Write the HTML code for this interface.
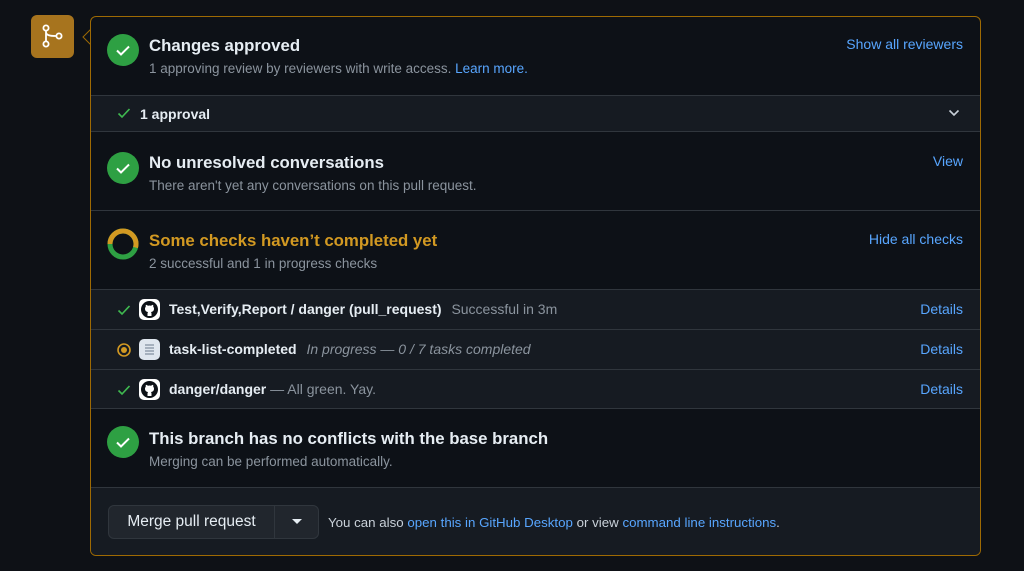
<!DOCTYPE html>
<html><head><style>
*{margin:0;padding:0;box-sizing:border-box}
body{width:1024px;height:571px;background:#0e1116;font-family:"Liberation Sans",sans-serif;color:#c9d1d9;position:relative;overflow:hidden}
.abs{position:absolute}
.icon{left:31px;top:15px;width:43px;height:43px;background:#a7741e;border-radius:6px}
.panel{left:90px;top:16px;width:891px;height:540px;border:1px solid #9e6a03;border-radius:6px;background:#0d1117;overflow:hidden}
.sec{position:absolute;left:0;width:889px;border-top:1px solid #30363d}
.t{position:absolute;left:58px;font-size:16.8px;font-weight:bold;color:#e6edf3}
.s{position:absolute;left:58px;font-size:13.5px;color:#8b949e}
.link{color:#58a6ff}
.r{position:absolute;right:17px;font-size:14px;color:#58a6ff}
.circ{position:absolute;left:16px;width:32px;height:32px;border-radius:50%;background:#2ea043}
.row{position:absolute;left:0;width:889px;height:40px;background:#161b22;border-top:1px solid #30363d}
.row .n{position:absolute;left:78px;top:11px;font-size:14px;font-weight:bold;color:#e6edf3}
.gh{position:absolute;left:48px;top:9px;width:21px;height:21px;border-radius:5px;background:#fff}
</style></head><body>
<div class="abs icon"><svg width="43" height="43" viewBox="0 0 43 43"><g fill="none" stroke="#fff" stroke-width="1.8"><circle cx="15" cy="13" r="2.6"/><circle cx="15" cy="29" r="2.6"/><circle cx="28" cy="21" r="2.6"/><path d="M15 15.6V26.4M15 17c0 3 3 4 10.4 4"/></g></svg></div>
<svg class="abs" style="left:82px;top:29px" width="10" height="16"><path d="M9 0L1 8L9 16" fill="#0d1117" stroke="#9e6a03"/></svg>
<div class="abs panel">
 <div class="circ" style="top:17px"><svg width="32" height="32"><path d="M10 16.5l4 4 8-8" fill="none" stroke="#fff" stroke-width="2"/></svg></div>
 <div class="t" style="top:19px">Changes approved</div>
 <div class="s" style="top:44px">1 approving review by reviewers with write access. <span class="link">Learn more.</span></div>
 <div class="r" style="top:19px">Show all reviewers</div>
 <div class="sec" style="top:78px;height:37px;background:#161b22">
  <svg class="abs" style="left:26px;top:10px" width="14" height="14"><path d="M1.5 7.5l3.5 3.5 7.5-8" fill="none" stroke="#3fb950" stroke-width="1.6"/></svg>
  <div class="abs" style="left:49px;top:10px;font-size:14px;font-weight:bold;color:#e6edf3">1 approval</div>
  <svg class="abs" style="left:857px;top:12px" width="12" height="10"><path d="M1.5 2.5l4.5 4.5 4.5-4.5" fill="none" stroke="#c9d1d9" stroke-width="1.6"/></svg>
 </div>
 <div class="sec" style="top:114px;height:80px;border-top:1px solid #30363d">
  <div class="circ" style="top:20px"><svg width="32" height="32"><path d="M10 16.5l4 4 8-8" fill="none" stroke="#fff" stroke-width="2"/></svg></div>
  <div class="t" style="top:21px">No unresolved conversations</div>
  <div class="s" style="top:46px">There aren't yet any conversations on this pull request.</div>
  <div class="r" style="top:21px">View</div>
 </div>
 <div class="sec" style="top:193px;height:80px">
  <svg class="abs" style="left:16px;top:17px" width="32" height="32"><circle cx="16" cy="16" r="13" fill="none" stroke="#2ea043" stroke-width="5"/><path d="M16 3A13 13 0 0 1 28.5 19.5" fill="none" stroke="#d29922" stroke-width="5"/><path d="M3 16A13 13 0 0 1 16 3" fill="none" stroke="#d29922" stroke-width="5"/></svg>
  <div class="t" style="top:20px;color:#d29922">Some checks haven’t completed yet</div>
  <div class="s" style="top:45px">2 successful and 1 in progress checks</div>
  <div class="r" style="top:20px">Hide all checks</div>
 </div>
 <div class="row" style="top:272px">
  <svg class="abs" style="left:26px;top:13px" width="14" height="14"><path d="M1.5 7.5l3.5 3.5 7.5-8" fill="none" stroke="#3fb950" stroke-width="1.6"/></svg>
  <div class="gh"><svg width="21" height="21"><circle cx="10.5" cy="10.5" r="8.5" fill="#0d1117"/><path d="M8.5 17v-2.5c0-.8.4-1.2.6-1.4-1.8-.3-3.1-1.2-3.1-3.3 0-.8.3-1.5.8-2-.1-.3-.2-1 .1-1.9 0 0 .7-.2 2 .8a6 6 0 0 1 3.2 0c1.3-1 2-.8 2-.8.3.9.2 1.6.1 1.9.5.5.8 1.2.8 2 0 2.1-1.3 3-3.1 3.3.3.2.6.7.6 1.4V17z" fill="#fff"/></svg></div>
  <div class="n">Test,Verify,Report / danger (pull_request) <span style="font-weight:normal;color:#8b949e;margin-left:6px">Successful in 3m</span></div>
  <div class="r" style="top:11px">Details</div>
 </div>
 <div class="row" style="top:312px">
  <svg class="abs" style="left:25px;top:12px" width="16" height="16"><circle cx="8" cy="8" r="6" fill="none" stroke="#d29922" stroke-width="1.6"/><circle cx="8" cy="8" r="3" fill="#d29922"/></svg>
  <div class="gh" style="background:#dfe6ee"><svg width="21" height="21"><g stroke="#6b7b8c" stroke-width="1"><path d="M6 6h9M6 9h9M6 12h9M6 15h9"/></g></svg></div>
  <div class="n">task-list-completed <span style="font-weight:normal;font-style:italic;color:#8b949e;margin-left:6px">In progress — 0 / 7 tasks completed</span></div>
  <div class="r" style="top:11px">Details</div>
 </div>
 <div class="row" style="top:352px">
  <svg class="abs" style="left:26px;top:13px" width="14" height="14"><path d="M1.5 7.5l3.5 3.5 7.5-8" fill="none" stroke="#3fb950" stroke-width="1.6"/></svg>
  <div class="gh"><svg width="21" height="21"><circle cx="10.5" cy="10.5" r="8.5" fill="#0d1117"/><path d="M8.5 17v-2.5c0-.8.4-1.2.6-1.4-1.8-.3-3.1-1.2-3.1-3.3 0-.8.3-1.5.8-2-.1-.3-.2-1 .1-1.9 0 0 .7-.2 2 .8a6 6 0 0 1 3.2 0c1.3-1 2-.8 2-.8.3.9.2 1.6.1 1.9.5.5.8 1.2.8 2 0 2.1-1.3 3-3.1 3.3.3.2.6.7.6 1.4V17z" fill="#fff"/></svg></div>
  <div class="n">danger/danger <span style="font-weight:normal;color:#8b949e">— All green. Yay.</span></div>
  <div class="r" style="top:11px">Details</div>
 </div>
 <div class="sec" style="top:391px;height:80px">
  <div class="circ" style="top:17px"><svg width="32" height="32"><path d="M10 16.5l4 4 8-8" fill="none" stroke="#fff" stroke-width="2"/></svg></div>
  <div class="t" style="top:20px">This branch has no conflicts with the base branch</div>
  <div class="s" style="top:45px">Merging can be performed automatically.</div>
 </div>
 <div class="sec" style="top:470px;height:70px;background:#161b22">
  <div class="abs" style="left:17px;top:17px;width:211px;height:34px;border:1px solid #30363d;border-radius:6px;background:#21262d">
   <div class="abs" style="left:0;top:0;width:166px;height:32px;border-right:1px solid #30363d;font-size:15.5px;color:#e6edf3;text-align:center;line-height:32px">Merge pull request</div>
   <svg class="abs" style="left:183px;top:13px" width="10" height="6"><path d="M0 0h10L5 5z" fill="#e6edf3"/></svg>
  </div>
  <div class="abs" style="left:237px;top:27px;font-size:13.3px;color:#c9d1d9">You can also <span class="link">open this in GitHub Desktop</span> or view <span class="link">command line instructions</span>.</div>
 </div>
</div>
</body></html>
